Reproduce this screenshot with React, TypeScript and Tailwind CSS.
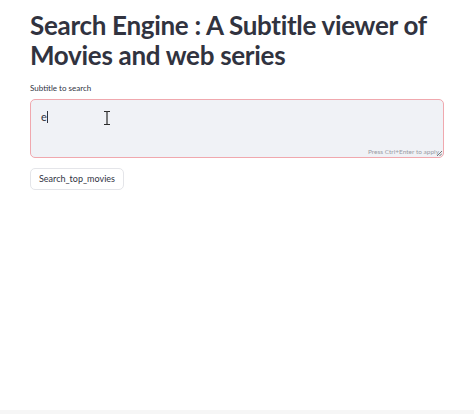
export default function App() {
  return (
    <div
      className="relative w-[474px] h-[414px] bg-white overflow-hidden text-[#31333f]"
      style={{ fontFamily: "Lato, 'Noto Sans', sans-serif" }}
    >
      <div className="px-[30px] pt-[10px]">
        <h1 className="text-[26px] leading-[30px] font-bold tracking-[-0.3px]">
          Search Engine : A Subtitle viewer of Movies and web series
        </h1>

        <div className="mt-[12px] text-[8px] leading-[12px]">Subtitle to search</div>

        {/* textarea */}
        <div className="relative mt-[5px] h-[59px] rounded-[5px] border border-[#f0a8ae] bg-[#f0f2f6]">
          <div className="absolute left-[10px] top-[10px] flex items-center text-[11px] leading-[14px]">
            e<span className="ml-[0.5px] inline-block w-px h-[12px] bg-[#31333f]" />
          </div>
          {/* mouse I-beam cursor */}
          <svg className="absolute left-[71px] top-[10px]" width="10" height="16" viewBox="0 0 10 16">
            <path d="M2 1.5h2.2c.5 0 .8.3.8.8 0-.5.3-.8.8-.8H8M2 14.5h2.2c.5 0 .8-.3.8-.8 0 .5.3.8.8.8H8M5 2.3v11.4" fill="none" stroke="#2b2b2b" strokeWidth="1.2" />
          </svg>
          <div className="absolute right-[4px] bottom-[1px] text-[6.5px] leading-[9px] text-[#9a9ca4]">
            Press Ctrl+Enter to apply
          </div>
          <svg className="absolute right-[1px] bottom-[1px]" width="6" height="6" viewBox="0 0 6 6">
            <path d="M1 6L6 1M3.5 6L6 3.5" stroke="#555" strokeWidth="0.8" />
          </svg>
        </div>

        <button className="mt-[10px] h-[22px] px-[8px] rounded-[5px] border border-[#e4e5e9] bg-white text-[9px] leading-[12px] text-[#31333f]">
          Search_top_movies
        </button>
      </div>

      <div className="absolute left-0 right-0 bottom-0 h-[4px] bg-[#f6f6f6]" />
    </div>
  );
}
